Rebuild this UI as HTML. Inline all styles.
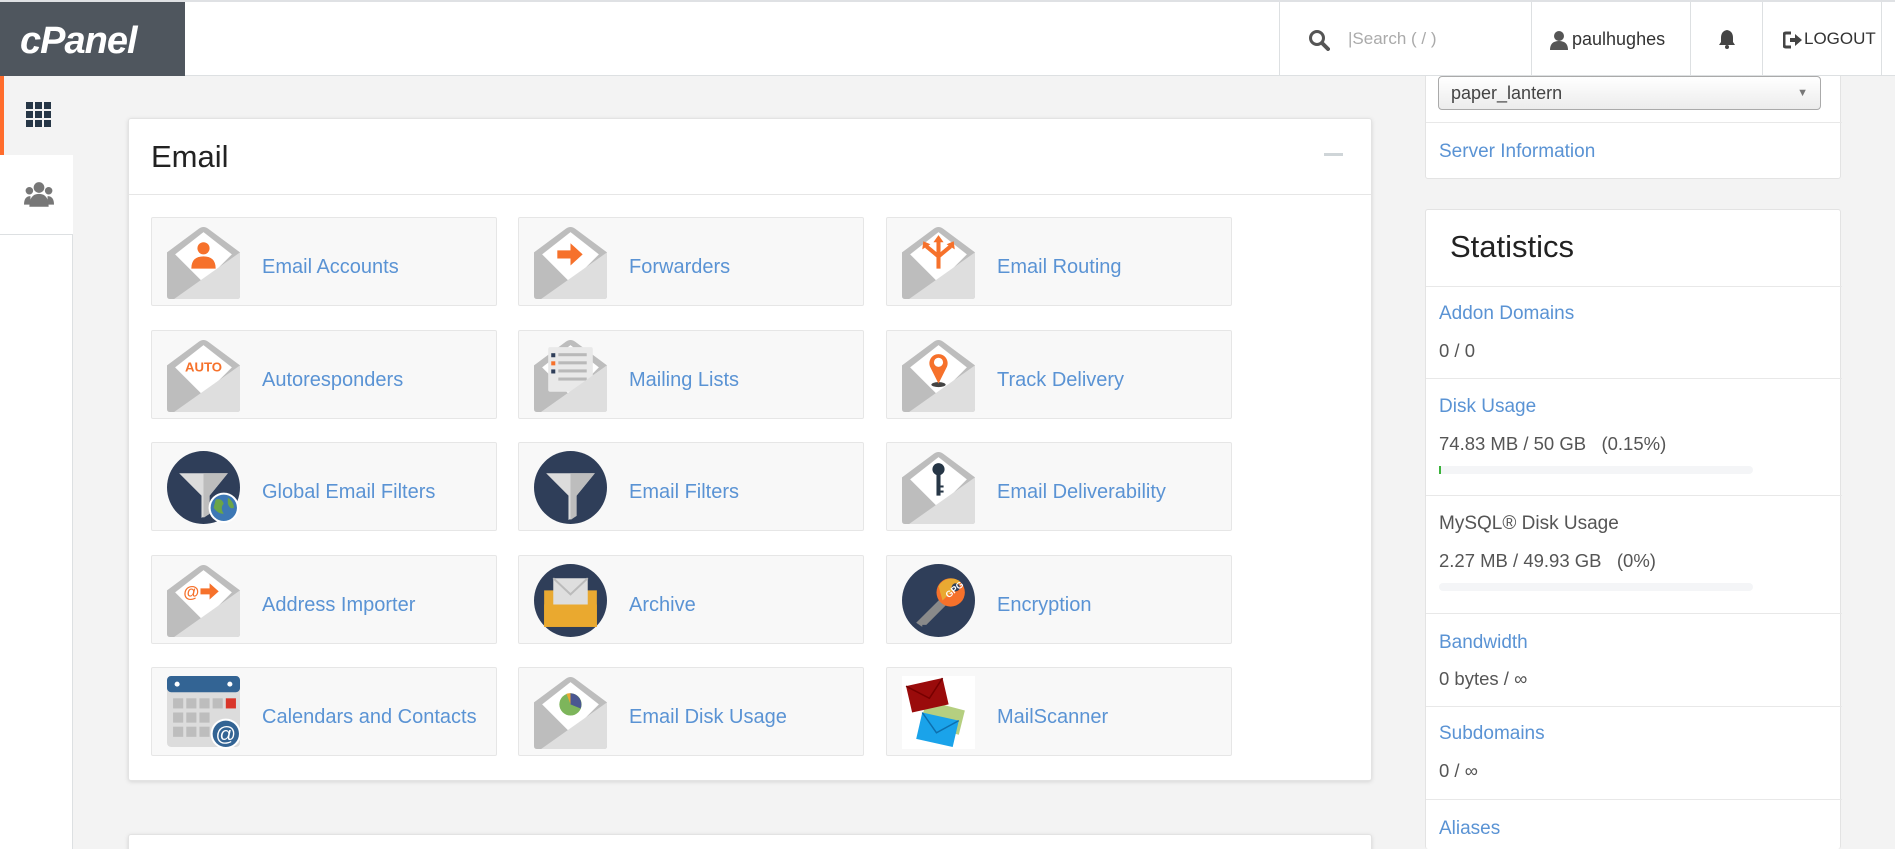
<!DOCTYPE html>
<html style="width:1895px;height:849px;overflow:hidden"><head><meta charset="utf-8">
<style>
*{box-sizing:border-box;margin:0;padding:0}
body{width:1895px;height:849px;overflow:hidden;background:#f3f3f3;font-family:"Liberation Sans",sans-serif;position:relative}
.hdr{position:absolute;left:0;top:0;width:1895px;height:76px;background:#fff;border-top:2px solid #dfe1e4;border-bottom:1px solid #dde0e2;z-index:10}
.logo{position:absolute;left:0;top:0;width:185px;height:74px;background:#4f565e;color:#fff;font:italic bold 38px "Liberation Sans",sans-serif;letter-spacing:-1px;padding:18px 0 0 20px}
.hsec{position:absolute;top:0;height:74px;border-left:1px solid #dde0e2;color:#333;font-size:18px;line-height:74px}
.side{position:absolute;left:0;top:76px;width:73px;height:773px;background:#fff;border-right:1px solid #dde0e2}
.act{position:absolute;left:0;top:0;width:73px;height:79px;background:#f3f3f3;border-left:4px solid #ff6c2c}
.sec2{position:absolute;left:0;top:79px;width:73px;height:80px;background:#fff;border-bottom:1px solid #dde0e2}
.panel{position:absolute;background:#fff;border:1px solid #e3e3e3;border-radius:3px;box-shadow:0 1px 4px rgba(0,0,0,.12)}
.tile{position:absolute;width:346px;height:89px;background:#f8f8f8;border:1px solid #e6e6e6;border-radius:2px}
.tile svg{position:absolute;left:15px;top:8px;width:73px;height:73px}
.tile span{position:absolute;left:110px;top:6px;line-height:87px;font-size:20px;color:#5a93d4;white-space:nowrap}
.rp{position:absolute;left:1425px;width:416px}
.row{position:absolute;left:0;width:416px;border-top:1px solid #e8e8e8}
.lnk{color:#5a93d4;font-size:19px}
.val{color:#555;font-size:18.5px}
.bar{position:absolute;left:13px;width:314px;height:8px;background:#f4f5f7;border-radius:4px}
</style></head><body>
<svg width="0" height="0" style="position:absolute">
<defs>
<symbol id="env" viewBox="0 0 72 72">
<path d="M0 26 L31 3 Q36 -1 41 3 L72 26 L72 69 Q72 72 69 72 L3 72 Q0 72 0 69 Z" fill="#bdbdbd"/>
<path d="M36 6 L64 28 L36 56 L8 28 Z" fill="#fff"/>
<path d="M7 72 L72 26 L72 69 Q72 72 69 72 Z" fill="#dedede"/>
</symbol>
<symbol id="circ" viewBox="0 0 72 72"><circle cx="36" cy="36" r="36" fill="#2f3e59"/></symbol>
</defs></svg>

<div class="hdr">
 <div class="logo">cPanel</div>
 <div class="hsec" style="left:1279px;width:252px">
  <svg style="position:absolute;left:28px;top:27px" width="22" height="22" viewBox="0 0 22 22"><circle cx="9" cy="9" r="6.5" fill="none" stroke="#555" stroke-width="3"/><path d="M14 14 L20 20" stroke="#555" stroke-width="4" stroke-linecap="round"/></svg>
  <span style="position:absolute;left:68px;color:#aaa;font-size:17px">|Search ( / )</span>
 </div>
 <div class="hsec" style="left:1531px;width:159px">
  <svg style="position:absolute;left:18px;top:28px" width="18" height="20" viewBox="0 0 18 20"><circle cx="9" cy="6" r="5" fill="#555"/><path d="M0 20 Q0 11 9 11 Q18 11 18 20 Z" fill="#555"/></svg>
  <span style="position:absolute;left:40px">paulhughes</span>
 </div>
 <div class="hsec" style="left:1690px;width:72px">
  <svg style="position:absolute;left:28px;top:27px" width="16" height="20" viewBox="0 0 16 20"><path d="M8 1 Q14 2 14 9 L14 13 L16 16 L0 16 L2 13 L2 9 Q2 2 8 1Z" fill="#444"/><circle cx="8" cy="18" r="2" fill="#444"/></svg>
 </div>
 <div class="hsec" style="left:1762px;width:120px;border-right:1px solid #dde0e2">
  <svg style="position:absolute;left:20px;top:29px" width="20" height="18" viewBox="0 0 20 18"><path d="M8 2 L3 2 Q1 2 1 4 L1 14 Q1 16 3 16 L8 16" fill="none" stroke="#444" stroke-width="3"/><path d="M7 7 L12 7 L12 3 L19 9 L12 15 L12 11 L7 11 Z" fill="#444"/></svg>
  <span style="position:absolute;left:41px;font-size:17px">LOGOUT</span>
 </div>
</div>

<div class="side">
 <div class="act">
  <svg style="position:absolute;left:22px;top:26px" width="26" height="26" viewBox="0 0 26 26" fill="#263646">
   <rect x="0" y="0" width="7" height="7"/><rect x="9" y="0" width="7" height="7"/><rect x="18" y="0" width="7" height="7"/>
   <rect x="0" y="9" width="7" height="7"/><rect x="9" y="9" width="7" height="7"/><rect x="18" y="9" width="7" height="7"/>
   <rect x="0" y="18" width="7" height="7"/><rect x="9" y="18" width="7" height="7"/><rect x="18" y="18" width="7" height="7"/>
  </svg>
 </div>
 <div class="sec2">
  <svg style="position:absolute;left:24px;top:26px" width="30" height="28" viewBox="0 0 28 26" fill="#777">
   <circle cx="14" cy="6" r="5"/><circle cx="5" cy="9" r="3.5"/><circle cx="23" cy="9" r="3.5"/>
   <path d="M5 24 Q5 12 14 12 Q23 12 23 24Z"/><path d="M0 22 Q0 14 6 14 L6 22Z"/><path d="M28 22 Q28 14 22 14 L22 22Z"/>
  </svg>
 </div>
</div>

<div class="panel" style="left:128px;top:118px;width:1244px;height:663px">
 <div style="height:76px;border-bottom:1px solid #e6e6e6;font-size:31px;color:#222;padding:20px 0 0 22px">Email</div>
 <div style="position:absolute;right:28px;top:34px;width:19px;height:3px;background:#cfd5d8"></div>
</div>
<div class="panel" style="left:128px;top:834px;width:1244px;height:40px"></div>

<div class="tile" style="left:151px;top:217px"><svg viewBox="0 0 72 72"><use href="#env"/><circle cx="36" cy="22" r="6" fill="#f6712b"/><path d="M24 42 Q24 30 36 30 Q48 30 48 42 Z" fill="#f6712b"/></svg><span>Email Accounts</span></div>
<div class="tile" style="left:518px;top:217px"><svg viewBox="0 0 72 72"><use href="#env"/><path d="M23 24 L36 24 L36 17 L48 28 L36 39 L36 32 L23 32Z" fill="#f6712b"/></svg><span>Forwarders</span></div>
<div class="tile" style="left:886px;top:217px"><svg viewBox="0 0 72 72"><use href="#env"/><path d="M36 42 L36 14 M36 30 L24 20 M36 30 L48 20" stroke="#f6712b" stroke-width="4" fill="none"/><path d="M31 16 L36 9 L41 16Z M20 23 L21 15 L28 18Z M52 23 L51 15 L44 18Z" fill="#f6712b"/></svg><span>Email Routing</span></div>

<div class="tile" style="left:151px;top:330px"><svg viewBox="0 0 72 72"><use href="#env"/><text x="36" y="32" text-anchor="middle" font-family="Liberation Sans" font-weight="bold" font-size="13" fill="#f6712b">AUTO</text></svg><span>Autoresponders</span></div>
<div class="tile" style="left:518px;top:330px"><svg viewBox="0 0 72 72"><use href="#env"/><rect x="14" y="8" width="44" height="44" rx="2" fill="#e9e9e9"/><g fill="#b9b9b9"><rect x="24" y="14" width="28" height="3"/><rect x="24" y="22" width="28" height="3"/><rect x="24" y="30" width="28" height="3"/><rect x="24" y="38" width="28" height="3"/></g><rect x="17" y="14" width="4" height="4" fill="#2f3e59"/><rect x="17" y="22" width="4" height="4" fill="#f6712b"/><rect x="17" y="30" width="4" height="4" fill="#2f3e59"/><path d="M7 72 L72 26 L72 69 Q72 72 69 72 Z" fill="#dedede"/></svg><span>Mailing Lists</span></div>
<div class="tile" style="left:886px;top:330px"><svg viewBox="0 0 72 72"><use href="#env"/><ellipse cx="36" cy="45" rx="7" ry="2.5" fill="#444"/><path d="M36 44 L28 28 A9 9 0 1 1 44 28 Z" fill="#f6712b"/><circle cx="36" cy="23" r="4.5" fill="#fff"/></svg><span>Track Delivery</span></div>

<div class="tile" style="left:151px;top:442px"><svg viewBox="0 0 72 72"><use href="#circ"/><path d="M12 22 L60 22 L42 44 L42 62 L34 66 L34 44Z" fill="#dcdcdc"/><path d="M36 22 L60 22 L42 44 L42 62 L36 66Z" fill="#bdbdbd"/><circle cx="56" cy="56" r="15" fill="#fff"/><circle cx="56" cy="56" r="13" fill="#3d78b5"/><path d="M48 48 Q54 46 56 52 Q52 56 56 62 Q50 62 46 56Z M60 46 Q66 50 66 56 Q62 58 60 52Z" fill="#6ba547"/></svg><span>Global Email Filters</span></div>
<div class="tile" style="left:518px;top:442px"><svg viewBox="0 0 72 72"><use href="#circ"/><path d="M12 22 L60 22 L42 44 L42 64 L34 68 L34 44Z" fill="#dcdcdc"/><path d="M36 22 L60 22 L42 44 L42 64 L36 68Z" fill="#bdbdbd"/></svg><span>Email Filters</span></div>
<div class="tile" style="left:886px;top:442px"><svg viewBox="0 0 72 72"><use href="#env"/><circle cx="36" cy="18" r="6" fill="#263646"/><rect x="34" y="20" width="4" height="24" fill="#263646"/><rect x="38" y="34" width="3" height="2" fill="#263646"/><rect x="38" y="39" width="3" height="2" fill="#263646"/></svg><span>Email Deliverability</span></div>

<div class="tile" style="left:151px;top:555px"><svg viewBox="0 0 72 72"><use href="#env"/><text x="24" y="33" text-anchor="middle" font-family="Liberation Sans" font-weight="bold" font-size="16" fill="#f6712b">@</text><path d="M33 24 L42 24 L42 19 L51 27 L42 35 L42 30 L33 30Z" fill="#f6712b"/></svg><span>Address Importer</span></div>
<div class="tile" style="left:518px;top:555px"><svg viewBox="0 0 72 72"><use href="#circ"/><path d="M10 26 L62 26 L62 62 L10 62Z" fill="#e9a932"/><path d="M19 14 L53 14 L53 40 L19 40Z" fill="#dedede"/><path d="M19 14 L36 30 L53 14" stroke="#bbb" stroke-width="2" fill="none"/><path d="M10 40 L62 40 L62 62 L10 62Z" fill="#eaa92f"/></svg><span>Archive</span></div>
<div class="tile" style="left:886px;top:555px"><svg viewBox="0 0 72 72"><use href="#circ"/><path d="M14 58 L40 32 L46 38 L24 60 L20 60 L20 62Z" fill="#8a8a8a"/><circle cx="48" cy="28" r="14" fill="#f6712b"/><path d="M36 22 A14 14 0 0 1 58 18 L40 36Z" fill="#e9a932"/><circle cx="53" cy="23" r="4" fill="#2f3e59"/><text x="46" y="34" transform="rotate(-40 46 34)" font-family="Liberation Sans" font-weight="bold" font-size="9" fill="#fff">GPG</text></svg><span>Encryption</span></div>

<div class="tile" style="left:151px;top:667px"><svg viewBox="0 0 72 72"><rect x="0" y="0" width="72" height="70" rx="4" fill="#dcdcdc"/><rect x="0" y="0" width="72" height="16" rx="4" fill="#336494"/><circle cx="10" cy="8" r="2.5" fill="#fff"/><circle cx="62" cy="8" r="2.5" fill="#fff"/><g fill="#bdbdbd"><rect x="6" y="22" width="10" height="10"/><rect x="19" y="22" width="10" height="10"/><rect x="32" y="22" width="10" height="10"/><rect x="45" y="22" width="10" height="10"/><rect x="6" y="36" width="10" height="10"/><rect x="19" y="36" width="10" height="10"/><rect x="32" y="36" width="10" height="10"/><rect x="6" y="50" width="10" height="10"/><rect x="19" y="50" width="10" height="10"/><rect x="32" y="50" width="10" height="10"/></g><rect x="58" y="22" width="10" height="10" fill="#d9362a"/><circle cx="58" cy="57" r="15" fill="#fff"/><circle cx="58" cy="57" r="13" fill="#336494"/><text x="58" y="64" text-anchor="middle" font-family="Liberation Sans" font-size="20" fill="#fff">@</text></svg><span>Calendars and Contacts</span></div>
<div class="tile" style="left:518px;top:667px"><svg viewBox="0 0 72 72"><use href="#env"/><circle cx="36" cy="28" r="11" fill="#7db55b"/><path d="M36 28 L36 17 A11 11 0 0 1 46 32Z" fill="#4a5791"/><path d="M36 28 L32 17.5 A11 11 0 0 1 36 17Z" fill="#e9a932"/></svg><span>Email Disk Usage</span></div>
<div class="tile" style="left:886px;top:667px"><svg viewBox="0 0 72 72"><rect width="72" height="72" fill="#fff"/><path d="M24 24 L62 34 L56 58 L18 48Z" fill="#b5cf80"/><path d="M4 10 L40 2 L46 28 L10 36Z" fill="#9a0b0b"/><path d="M4 10 L27 22 L40 2" stroke="#700" stroke-width="1.5" fill="none"/><path d="M20 36 L56 44 L50 70 L14 62Z" fill="#1aa3ea"/><path d="M20 36 L34 56 L56 44" stroke="#0d6fae" stroke-width="1.5" fill="none"/></svg><span>MailScanner</span></div>

<div class="panel rp" style="top:60px;height:119px;box-shadow:none">
 <div style="position:absolute;left:12px;top:15px;width:383px;height:34px;border:1px solid #aaa;border-radius:4px;background:linear-gradient(#fff,#ececec);color:#444;font-size:18px;line-height:32px;padding-left:12px">paper_lantern<span style="position:absolute;right:12px;font-size:11px;color:#777">▼</span></div>
 <div class="row" style="top:61px;height:57px"><span class="lnk" style="position:absolute;left:13px;top:18px">Server Information</span></div>
</div>
<div class="panel rp" style="top:209px;height:640px;box-shadow:none;border-bottom:none">
 <div style="font-size:31px;color:#222;padding:19px 0 0 24px;height:76px">Statistics</div>
 <div class="row" style="top:76px;height:92px"><div class="lnk" style="position:absolute;left:13px;top:16px">Addon Domains</div><div class="val" style="position:absolute;left:13px;top:53px">0 / 0</div></div>
 <div class="row" style="top:168px;height:117px"><div class="lnk" style="position:absolute;left:13px;top:17px">Disk Usage</div><div class="val" style="position:absolute;left:13px;top:54px;white-space:pre">74.83 MB / 50 GB   (0.15%)</div><div class="bar" style="top:87px"><div style="width:2px;height:8px;background:#3bb33b"></div></div></div>
 <div class="row" style="top:285px;height:118px"><div class="val" style="position:absolute;left:13px;top:17px;font-size:19px">MySQL® Disk Usage</div><div class="val" style="position:absolute;left:13px;top:54px;white-space:pre">2.27 MB / 49.93 GB   (0%)</div><div class="bar" style="top:87px"></div></div>
 <div class="row" style="top:403px;height:93px"><div class="lnk" style="position:absolute;left:13px;top:18px">Bandwidth</div><div class="val" style="position:absolute;left:13px;top:54px">0 bytes / ∞</div></div>
 <div class="row" style="top:496px;height:93px"><div class="lnk" style="position:absolute;left:13px;top:16px">Subdomains</div><div class="val" style="position:absolute;left:13px;top:53px">0 / ∞</div></div>
 <div class="row" style="top:589px;height:51px"><div class="lnk" style="position:absolute;left:13px;top:18px">Aliases</div></div>
</div>
</body></html>
